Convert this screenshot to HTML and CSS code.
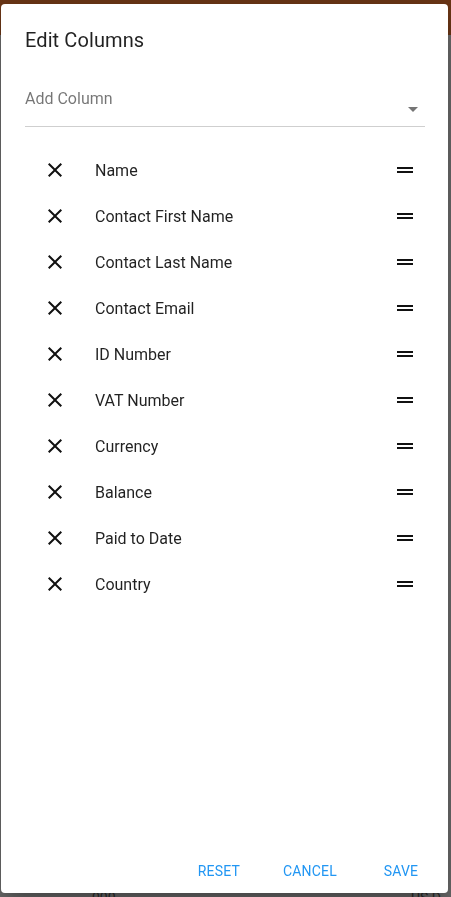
FILE: index.html
```html
<!DOCTYPE html>
<html lang="en">
<head>
<meta charset="utf-8">
<title>Edit Columns</title>
<link rel="stylesheet" href="styles.css">
</head>
<body>
<div class="page">
  <div class="appbar"></div>
  <div class="content">
    <div class="bg-row"><span class="bg-left">000</span><span class="bg-right">US D</span></div>
  </div>
</div>

<div class="dialog">
  <h2 class="title">Edit Columns</h2>
  <div class="select">
    <span class="select-label">Add Column</span>
    <svg class="arrow" viewBox="0 0 24 24" width="24" height="24"><path d="M7 10l5 5 5-5z"/></svg>
  </div>
  <ul class="list">
    <li class="item"><svg class="ico" viewBox="0 0 24 24"><path d="M19 6.41L17.59 5 12 10.59 6.41 5 5 6.41 10.59 12 5 17.59 6.41 19 12 13.41 17.59 19 19 17.59 13.41 12z"/></svg><span class="label">Name</span><svg class="ico handle" viewBox="0 0 24 24"><path d="M20 9H4v2h16V9zM4 15h16v-2H4v2z"/></svg></li>
    <li class="item"><svg class="ico" viewBox="0 0 24 24"><path d="M19 6.41L17.59 5 12 10.59 6.41 5 5 6.41 10.59 12 5 17.59 6.41 19 12 13.41 17.59 19 19 17.59 13.41 12z"/></svg><span class="label">Contact First Name</span><svg class="ico handle" viewBox="0 0 24 24"><path d="M20 9H4v2h16V9zM4 15h16v-2H4v2z"/></svg></li>
    <li class="item"><svg class="ico" viewBox="0 0 24 24"><path d="M19 6.41L17.59 5 12 10.59 6.41 5 5 6.41 10.59 12 5 17.59 6.41 19 12 13.41 17.59 19 19 17.59 13.41 12z"/></svg><span class="label">Contact Last Name</span><svg class="ico handle" viewBox="0 0 24 24"><path d="M20 9H4v2h16V9zM4 15h16v-2H4v2z"/></svg></li>
    <li class="item"><svg class="ico" viewBox="0 0 24 24"><path d="M19 6.41L17.59 5 12 10.59 6.41 5 5 6.41 10.59 12 5 17.59 6.41 19 12 13.41 17.59 19 19 17.59 13.41 12z"/></svg><span class="label">Contact Email</span><svg class="ico handle" viewBox="0 0 24 24"><path d="M20 9H4v2h16V9zM4 15h16v-2H4v2z"/></svg></li>
    <li class="item"><svg class="ico" viewBox="0 0 24 24"><path d="M19 6.41L17.59 5 12 10.59 6.41 5 5 6.41 10.59 12 5 17.59 6.41 19 12 13.41 17.59 19 19 17.59 13.41 12z"/></svg><span class="label">ID Number</span><svg class="ico handle" viewBox="0 0 24 24"><path d="M20 9H4v2h16V9zM4 15h16v-2H4v2z"/></svg></li>
    <li class="item"><svg class="ico" viewBox="0 0 24 24"><path d="M19 6.41L17.59 5 12 10.59 6.41 5 5 6.41 10.59 12 5 17.59 6.41 19 12 13.41 17.59 19 19 17.59 13.41 12z"/></svg><span class="label">VAT Number</span><svg class="ico handle" viewBox="0 0 24 24"><path d="M20 9H4v2h16V9zM4 15h16v-2H4v2z"/></svg></li>
    <li class="item"><svg class="ico" viewBox="0 0 24 24"><path d="M19 6.41L17.59 5 12 10.59 6.41 5 5 6.41 10.59 12 5 17.59 6.41 19 12 13.41 17.59 19 19 17.59 13.41 12z"/></svg><span class="label">Currency</span><svg class="ico handle" viewBox="0 0 24 24"><path d="M20 9H4v2h16V9zM4 15h16v-2H4v2z"/></svg></li>
    <li class="item"><svg class="ico" viewBox="0 0 24 24"><path d="M19 6.41L17.59 5 12 10.59 6.41 5 5 6.41 10.59 12 5 17.59 6.41 19 12 13.41 17.59 19 19 17.59 13.41 12z"/></svg><span class="label">Balance</span><svg class="ico handle" viewBox="0 0 24 24"><path d="M20 9H4v2h16V9zM4 15h16v-2H4v2z"/></svg></li>
    <li class="item"><svg class="ico" viewBox="0 0 24 24"><path d="M19 6.41L17.59 5 12 10.59 6.41 5 5 6.41 10.59 12 5 17.59 6.41 19 12 13.41 17.59 19 19 17.59 13.41 12z"/></svg><span class="label">Paid to Date</span><svg class="ico handle" viewBox="0 0 24 24"><path d="M20 9H4v2h16V9zM4 15h16v-2H4v2z"/></svg></li>
    <li class="item"><svg class="ico" viewBox="0 0 24 24"><path d="M19 6.41L17.59 5 12 10.59 6.41 5 5 6.41 10.59 12 5 17.59 6.41 19 12 13.41 17.59 19 19 17.59 13.41 12z"/></svg><span class="label">Country</span><svg class="ico handle" viewBox="0 0 24 24"><path d="M20 9H4v2h16V9zM4 15h16v-2H4v2z"/></svg></li>
  </ul>
  <div class="actions">
    <button class="btn">Reset</button>
    <button class="btn">Cancel</button>
    <button class="btn">Save</button>
  </div>
</div>
</body>
</html>
```
FILE: styles.css
```css
html, body {
  margin: 0;
  padding: 0;
  height: 100%;
  overflow: hidden;
}
body {
  font-family: Roboto, "Liberation Sans", Arial, sans-serif;
  background: #6d6d6d;
}
.page {
  display: flex;
  flex-direction: column;
  height: 100%;
}
.appbar {
  height: 35px;
  background: #6b3616;
  flex: none;
}
.content {
  flex: 1;
  background: #6d6d6d;
  padding-top: 855px;
}
.bg-row {
  display: flex;
  justify-content: space-between;
  padding: 0 10px 0 92px;
  font-size: 14px;
  line-height: 16px;
  color: #2b2b2b;
}
.dialog {
  position: fixed;
  left: 1px;
  top: 4px;
  width: 447px;
  height: 889px;
  box-sizing: border-box;
  background: #fff;
  border-radius: 4px;
  box-shadow: 0 11px 15px -7px rgba(0,0,0,0.2), 0 24px 38px 3px rgba(0,0,0,0.14), 0 9px 46px 8px rgba(0,0,0,0.12);
  display: flex;
  flex-direction: column;
}
.title {
  margin: 0;
  padding: 20px 24px 0 24px;
  font-size: 20px;
  line-height: 32px;
  font-weight: 400;
  color: rgba(0,0,0,0.87);
  letter-spacing: 0.1px;
}
.select {
  margin: 0 23px 0 24px;
  height: 71px;
  box-sizing: border-box;
  padding-top: 33px;
  border-bottom: 1px solid #cfcfcf;
  display: flex;
}
.select-label {
  flex: 1;
  font-size: 16px;
  line-height: 19px;
  color: rgba(0,0,0,0.54);
  align-self: flex-start;
}
.arrow {
  align-self: flex-end;
  margin-bottom: 5px;
  fill: rgba(0,0,0,0.54);
  flex: none;
}
.list {
  list-style: none;
  margin: 20px 0 0 0;
  padding: 0;
  flex: 1;
}
.item {
  height: 46px;
  display: flex;
  align-items: center;
  padding: 0 31px 0 42px;
}
.ico {
  width: 24px;
  height: 24px;
  fill: #111;
  flex: none;
}
.label {
  flex: 1;
  margin-left: 28px;
  font-size: 16px;
  color: rgba(0,0,0,0.87);
}
.actions {
  display: flex;
  justify-content: flex-end;
  gap: 24px;
  padding: 0 15px 4px 0;
}
.btn {
  font-family: Roboto, "Liberation Sans", Arial, sans-serif;
  font-size: 14px;
  font-weight: 400;
  text-transform: uppercase;
  letter-spacing: 0.2px;
  color: #2196f3;
  background: none;
  border: 0;
  min-width: 64px;
  height: 36px;
  padding: 0 8px;
  cursor: pointer;
}
```
